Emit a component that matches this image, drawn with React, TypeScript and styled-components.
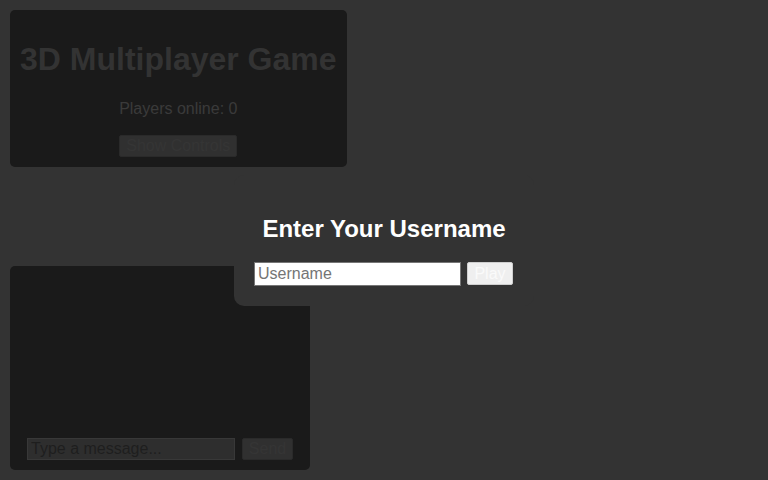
import * as React from 'react';
import styled, { createGlobalStyle } from 'styled-components';

const GlobalStyle = createGlobalStyle`
	html, body {
		margin: 0;
		padding: 0;
		background-color: #333333;
		font-family: "Liberation Sans", Arial, sans-serif;
		overflow: hidden;
	}
`;

const Page = styled.div`
	display: flex;
	flex-direction: column;
	justify-content: space-between;
	align-items: flex-start;
	box-sizing: border-box;
	height: 100vh;
	padding: 10px;
`;

const InfoPanel = styled.div`
	box-sizing: border-box;
	background-color: #1a1a1a;
	border-radius: 5px;
	padding: 10px;
	text-align: center;
`;

const Title = styled.h1`
	font-size: 32px;
	font-weight: bold;
	color: #333333;
	margin: 21px 0 21px 0;
	line-height: 37px;
	white-space: nowrap;
`;

const PlayerCount = styled.p`
	font-size: 16px;
	color: #3a3a3a;
	margin: 0 0 17px 0;
	line-height: 19px;
`;

const DimButton = styled.button<{ $width: number }>`
	box-sizing: border-box;
	width: ${props => props.$width}px;
	height: 22px;
	padding: 0 2px;
	border: 1px solid #2a2a2a;
	border-radius: 2px;
	background-color: #303030;
	color: #353535;
	font-family: "Liberation Sans", Arial, sans-serif;
	font-size: 16px;
	line-height: 18px;
	white-space: nowrap;
	overflow: hidden;
	vertical-align: top;
`;

const ChatPanel = styled.div`
	box-sizing: border-box;
	width: 300px;
	height: 204px;
	background-color: #1a1a1a;
	border-radius: 5px;
	padding: 10px 17px;
	display: flex;
	flex-direction: column;
	justify-content: flex-end;
`;

const ChatRow = styled.div`
	display: flex;
	flex-direction: row;
	gap: 7px;
`;

const ChatInput = styled.input`
	box-sizing: border-box;
	width: 208px;
	height: 22px;
	padding: 0 3px;
	border: 1px solid #383838;
	background-color: #2e2e2e;
	color: #1e1e1e;
	font-family: "Liberation Sans", Arial, sans-serif;
	font-size: 16px;
	outline: none;

	&::placeholder {
		color: #1e1e1e;
	}
`;

const ModalLayer = styled.div`
	position: fixed;
	inset: 0;
	display: flex;
	align-items: center;
	justify-content: center;
`;

const Modal = styled.div`
	box-sizing: border-box;
	width: 300px;
	background-color: #333333;
	border-radius: 10px;
	padding: 20px;
	text-align: center;
`;

const ModalTitle = styled.h2`
	font-size: 24px;
	font-weight: bold;
	color: #ffffff;
	margin: 20px 0 20px 0;
	line-height: 27px;
`;

const ModalRow = styled.div`
	display: flex;
	flex-direction: row;
	align-items: center;
	gap: 6px;
`;

const UsernameInput = styled.input`
	box-sizing: border-box;
	width: 207px;
	height: 24px;
	padding: 0 3px;
	border: 1px solid #767676;
	background-color: #ffffff;
	color: #000000;
	font-family: "Liberation Sans", Arial, sans-serif;
	font-size: 16px;
	outline: none;

	&::placeholder {
		color: #757575;
	}
`;

const PlayButton = styled.button`
	box-sizing: border-box;
	width: 46px;
	height: 23px;
	padding: 0 6px;
	border: 1px solid #cfcfcf;
	border-radius: 2px;
	background-color: #efefef;
	color: #fafafa;
	font-family: "Liberation Sans", Arial, sans-serif;
	font-size: 16px;
	line-height: 18px;
`;

export default function App() {
	return (
		<>
			<GlobalStyle />
			<Page>
				<InfoPanel>
					<Title>3D Multiplayer Game</Title>
					<PlayerCount>Players online: 0</PlayerCount>
					<DimButton $width={118}>Show Controls</DimButton>
				</InfoPanel>
				<ChatPanel>
					<ChatRow>
						<ChatInput placeholder="Type a message..." />
						<DimButton $width={51}>Send</DimButton>
					</ChatRow>
				</ChatPanel>
			</Page>
			<ModalLayer>
				<Modal>
					<ModalTitle>Enter Your Username</ModalTitle>
					<ModalRow>
						<UsernameInput placeholder="Username" />
						<PlayButton>Play</PlayButton>
					</ModalRow>
				</Modal>
			</ModalLayer>
		</>
	);
}
